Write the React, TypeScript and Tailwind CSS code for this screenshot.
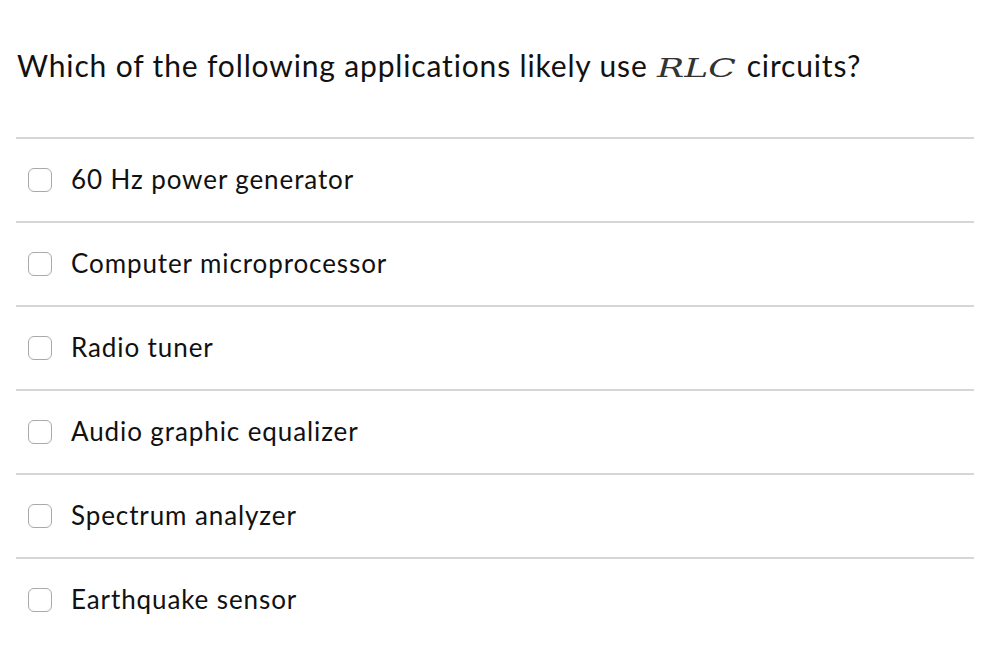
import React from "react";

const items = [
  "60 Hz power generator",
  "Computer microprocessor",
  "Radio tuner",
  "Audio graphic equalizer",
  "Spectrum analyzer",
  "Earthquake sensor",
];

export default function App() {
  return (
    <div
      className="w-[1000px] h-[660px] bg-white text-[#111] overflow-hidden"
      style={{ fontFamily: "Lato, 'Noto Sans', sans-serif" }}
    >
      <div className="pl-[17px] pt-[47px] h-[137px]">
        <p className="text-[30px] leading-[36px] tracking-[0.85px] whitespace-nowrap">
          Which of the following applications likely use{" "}
          <span className="inline-block w-[81px] ml-[1px]">
            <span
              className="inline-block origin-left scale-x-[1.39] italic text-[#333] text-[26px] tracking-[0px]"
              style={{ fontFamily: "'DejaVu Serif', 'Liberation Serif', serif" }}
            >
              RLC
            </span>
          </span>
          {" "}circuits?
        </p>
      </div>
      <div className="mx-[16px] w-[958px]">
        {items.map((t) => (
          <div
            key={t}
            className="h-[84px] flex items-center border-t-2 border-[#d6d6d6] pl-[12px]"
          >
            <span className="w-[24px] h-[24px] rounded-[6px] border border-[#a9a9a9] bg-white shrink-0" />
            <span className="ml-[19px] text-[26px] leading-[30px] tracking-[0.9px] whitespace-nowrap -mt-[2px]">
              {t}
            </span>
          </div>
        ))}
      </div>
    </div>
  );
}
